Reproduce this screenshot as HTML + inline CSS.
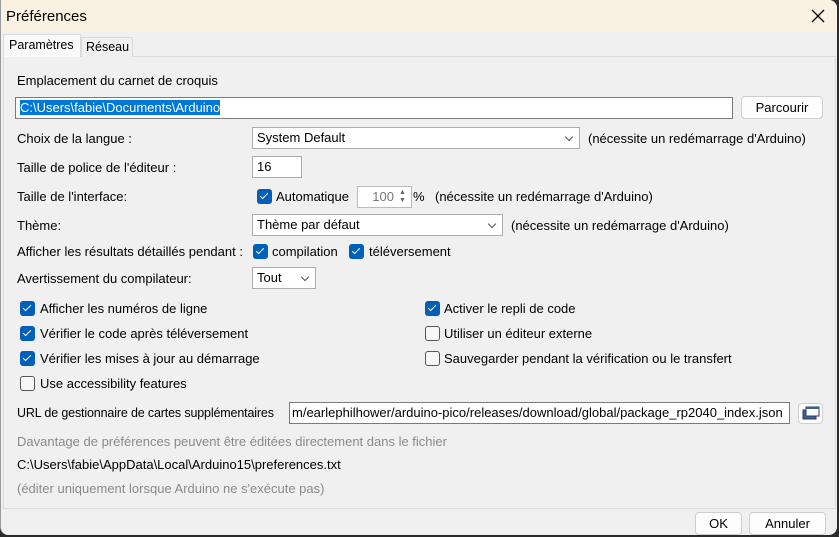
<!DOCTYPE html>
<html><head><meta charset="utf-8"><style>
*{box-sizing:border-box;margin:0;padding:0}
body{width:839px;height:537px;background:#2b2b2b;font-family:"Liberation Sans",sans-serif;font-size:13px;color:#000;position:relative;overflow:hidden}
.win{position:absolute;left:0;top:0;width:837px;height:535px;background:#f0f0f0;border-radius:0 8px 8px 8px;overflow:hidden;border-left:1px solid #9a9a9a}
.tb{position:absolute;left:0;top:0;width:100%;height:32px;background:#f9f1e1}
.a{position:absolute;white-space:nowrap}
.t{line-height:15px}
.inp{position:absolute;background:#fff;border:1px solid #7a7a7a;height:22px;line-height:20px;padding-left:4px}
.btn{position:absolute;background:#fdfdfd;border:1px solid #cfcfcf;border-radius:4px;height:23px;line-height:21px;text-align:center}
.sel{position:absolute;background:#fff;border:1px solid #adadad;height:22px;line-height:20px;padding-left:4px}
.sel:after{content:"";position:absolute;right:7px;top:6px;width:5px;height:5px;border-right:1px solid #555;border-bottom:1px solid #555;transform:rotate(45deg)}
.cb{position:absolute;width:15px;height:15px;border-radius:3px;background:#005fb8}
.cb:after{content:"";position:absolute;left:5px;top:2px;width:3px;height:7px;border-right:1.5px solid #fff;border-bottom:1.5px solid #fff;transform:rotate(45deg)}
.cbo{position:absolute;width:15px;height:15px;border-radius:3px;border:1px solid #555;background:#f7f7f7}
.g{color:#8a8a8a}
</style></head><body>
<div class="win">
<div class="tb"></div>
<div class="a" style="left:5px;top:8px;font-size:15px">Préférences</div>
<svg class="a" style="left:810px;top:9px" width="14" height="14"><path d="M1 1L13 13M13 1L1 13" stroke="#000" stroke-width="1.3"/></svg>
<div class="a" style="left:2px;top:56px;width:833px;height:453px;border:1px solid #dadada;background:#f0f0f0"></div>
<div class="a" style="left:2px;top:34px;width:78px;height:23px;background:#f9f9f9;border:1px solid #dadada;border-bottom:none;padding:3px 0 0 5px;font-size:12.5px">Paramètres</div>
<div class="a" style="left:80px;top:37px;width:52px;height:20px;background:#f0f0f0;border:1px solid #dadada;border-bottom:none;padding:2px 0 0 4px;font-size:12.5px">Réseau</div>

<div class="a t" style="left:16px;top:73px">Emplacement du carnet de croquis</div>
<div class="inp" style="left:14px;top:97px;width:718px;padding-left:4px"><span style="background:#0078d7;color:#fff">C:\Users\fabie\Documents\Arduino</span></div>
<div class="btn" style="left:740px;top:96px;width:82px">Parcourir</div>

<div class="a t" style="left:16px;top:131px">Choix de la langue :</div>
<div class="sel" style="left:251px;top:127px;width:328px">System Default</div>
<div class="a t" style="left:587px;top:131px">(nécessite un redémarrage d'Arduino)</div>

<div class="a t" style="left:16px;top:160px">Taille de police de l'éditeur :</div>
<div class="inp" style="left:251px;top:156px;width:50px;border-color:#adadad">16</div>

<div class="a t" style="left:16px;top:189px">Taille de l'interface:</div>
<div class="cb" style="left:256px;top:189px"></div>
<div class="a t" style="left:275px;top:189px">Automatique</div>
<div class="inp" style="left:356px;top:186px;width:55px;border-color:#bbb;color:#777;text-align:right;padding-right:17px">100</div>
<div class="a" style="left:398px;top:189px;font-size:7px;color:#666;line-height:8px">▲<br>▼</div>
<div class="a t" style="left:412px;top:189px">%</div>
<div class="a t" style="left:434px;top:189px">(nécessite un redémarrage d'Arduino)</div>

<div class="a t" style="left:16px;top:218px">Thème:</div>
<div class="sel" style="left:251px;top:214px;width:251px">Thème par défaut</div>
<div class="a t" style="left:510px;top:218px">(nécessite un redémarrage d'Arduino)</div>

<div class="a t" style="left:16px;top:244px">Afficher les résultats détaillés pendant :</div>
<div class="cb" style="left:252px;top:244px"></div>
<div class="a t" style="left:271px;top:244px">compilation</div>
<div class="cb" style="left:348px;top:244px"></div>
<div class="a t" style="left:368px;top:244px">téléversement</div>

<div class="a t" style="left:16px;top:271px">Avertissement du compilateur:</div>
<div class="sel" style="left:251px;top:267px;width:64px">Tout</div>

<div class="cb" style="left:19px;top:301px"></div><div class="a t" style="left:39px;top:301px">Afficher les numéros de ligne</div>
<div class="cb" style="left:19px;top:326px"></div><div class="a t" style="left:39px;top:326px">Vérifier le code après téléversement</div>
<div class="cb" style="left:19px;top:351px"></div><div class="a t" style="left:39px;top:351px">Vérifier les mises à jour au démarrage</div>
<div class="cbo" style="left:19px;top:376px"></div><div class="a t" style="left:39px;top:376px">Use accessibility features</div>
<div class="cb" style="left:424px;top:301px"></div><div class="a t" style="left:443px;top:301px">Activer le repli de code</div>
<div class="cbo" style="left:424px;top:326px"></div><div class="a t" style="left:443px;top:326px">Utiliser un éditeur externe</div>
<div class="cbo" style="left:424px;top:351px"></div><div class="a t" style="left:443px;top:351px">Sauvegarder pendant la vérification ou le transfert</div>

<div class="a t" style="left:16px;top:406px;font-size:12.5px;letter-spacing:-0.15px">URL de gestionnaire de cartes supplémentaires</div>
<div class="inp" style="left:288px;top:402px;width:501px;overflow:hidden;padding-left:2px">m/earlephilhower/arduino-pico/releases/download/global/package_rp2040_index.json</div>
<div class="btn" style="left:797px;top:403px;width:25px;height:21px">
<svg width="23" height="19" viewBox="0 0 23 19"><rect x="4" y="6" width="13" height="9" fill="#3e5f94" stroke="#2a3f66"/><rect x="7" y="3" width="13" height="9" fill="#fff" stroke="#2a3f66"/><rect x="7" y="3" width="13" height="2" fill="#3e5f94"/></svg></div>

<div class="a t g" style="left:16px;top:434px">Davantage de préférences peuvent être éditées directement dans le fichier</div>
<div class="a t" style="left:16px;top:457px">C:\Users\fabie\AppData\Local\Arduino15\preferences.txt</div>
<div class="a t g" style="left:16px;top:481px">(éditer uniquement lorsque Arduino ne s'exécute pas)</div>

<div class="btn" style="left:694px;top:512px;width:47px">OK</div>
<div class="btn" style="left:748px;top:512px;width:77px">Annuler</div>
</div>
</body></html>
